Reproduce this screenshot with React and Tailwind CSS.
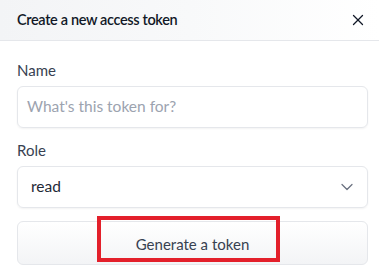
import { X, ChevronDown } from 'lucide-react'

export default function App() {
  return (
    <div className="w-[379px] h-[274px] bg-white overflow-hidden font-['Lato',sans-serif] text-[#1f2937]">
      {/* Header */}
      <div className="h-[41px] flex items-center justify-between pl-[17px] pr-[12px] border-b border-[#e5e7eb] bg-gradient-to-r from-[#f3f4f6] via-[#f8f9fa] to-white">
        <h2 className="text-[14.5px] font-semibold tracking-[-0.35px] text-[#111827]">Create a new access token</h2>
        <X className="w-[18px] h-[18px] text-[#111827]" strokeWidth={1.7} />
      </div>

      {/* Body */}
      <div className="px-[17px] pt-[19px]">
        <label className="block text-[15px] leading-[20px] text-[#374151]">Name</label>
        <div className="mt-[6px] h-[42px] w-[351px] rounded-[6px] border border-[#e5e7eb] shadow-[0_1px_2px_rgba(0,0,0,0.05)] flex items-center px-[9px]">
          <span className="text-[15.5px] text-[#9ca3af]">What's this token for?</span>
        </div>

        <label className="block mt-[12px] text-[15px] leading-[20px] text-[#374151]">Role</label>
        <div className="mt-[6px] h-[42px] w-[351px] rounded-[6px] border border-[#e5e7eb] shadow-[0_1px_2px_rgba(0,0,0,0.05)] flex items-center justify-between pl-[13px] pr-[10px]">
          <span className="text-[15.5px] text-[#1f2937]">read</span>
          <ChevronDown className="w-[20px] h-[20px] text-[#6b7280]" strokeWidth={1.5} />
        </div>

        <div className="relative mt-[13px]">
          <button className="h-[44px] w-[351px] rounded-[6px] border border-[#e5e7eb] bg-gradient-to-b from-white to-[#f3f4f6] text-[15px] text-[#374151] flex items-center justify-center pt-[3px]">
            Generate a token
          </button>
          {/* annotation box */}
          <div className="absolute left-[80px] top-[-5px] w-[183px] h-[46px] border-[4px] border-[#e3202b]" />
        </div>
      </div>
    </div>
  )
}
